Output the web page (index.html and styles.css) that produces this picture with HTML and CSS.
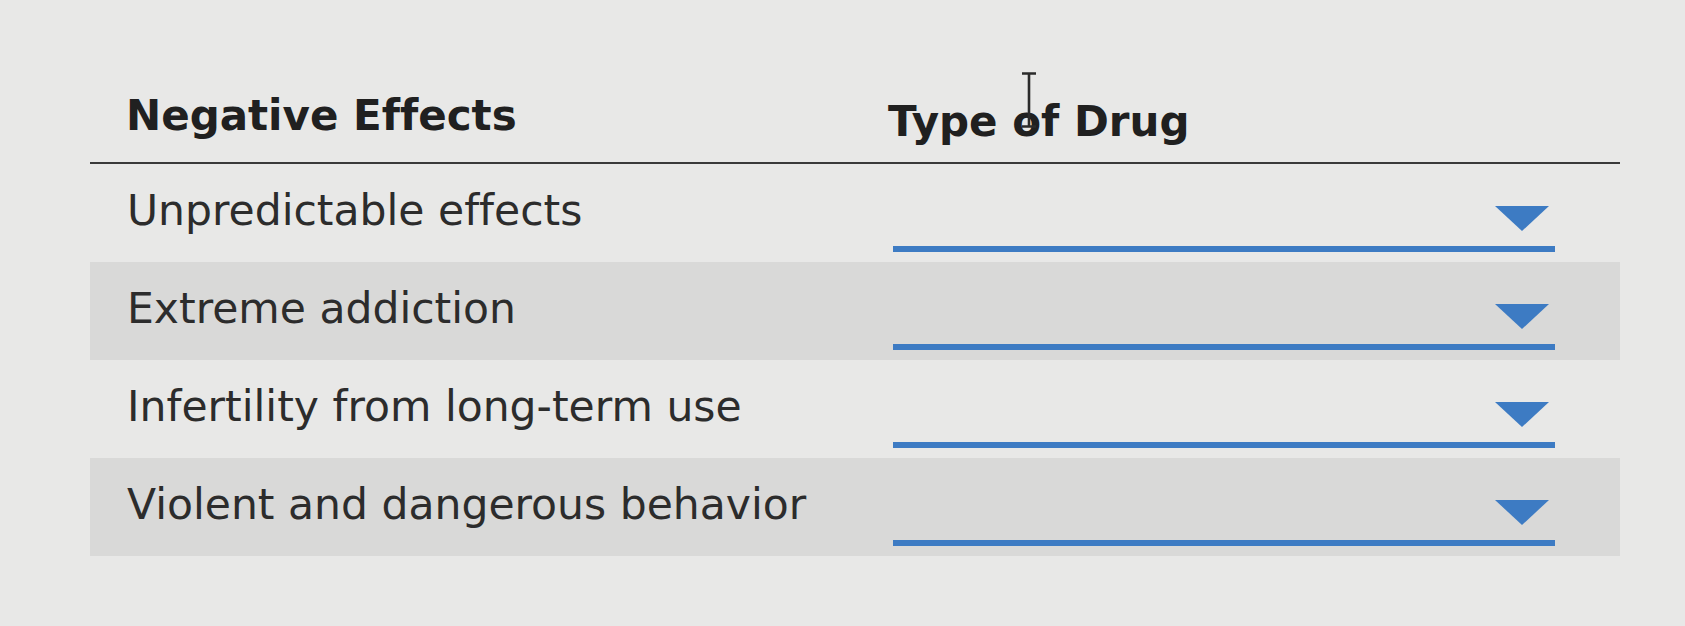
FILE: index.html
```html
<!DOCTYPE html>
<html lang="en">
<head>
<meta charset="utf-8">
<title>Negative Effects</title>
<link rel="stylesheet" href="styles.css">
</head>
<body>
<div class="page">
  <div class="table">
    <div class="head">
      <div class="hcell first">Negative Effects</div>
      <div class="hcell second">Type of Drug</div>
    </div>
    <div class="row">
      <div class="label">Unpredictable effects</div>
      <div class="select"><span class="arrow"></span><span class="line"></span></div>
    </div>
    <div class="row shaded">
      <div class="label">Extreme addiction</div>
      <div class="select"><span class="arrow"></span><span class="line"></span></div>
    </div>
    <div class="row">
      <div class="label">Infertility from long-term use</div>
      <div class="select"><span class="arrow"></span><span class="line"></span></div>
    </div>
    <div class="row shaded">
      <div class="label">Violent and dangerous behavior</div>
      <div class="select"><span class="arrow"></span><span class="line"></span></div>
    </div>
  </div>
  <svg class="cursor" width="20" height="56" viewBox="0 0 20 56" aria-hidden="true">
    <path d="M3 1.5h14M10 1.5v53M3 54.5h14" stroke="#2b2b2b" stroke-width="2.6" fill="none"/>
  </svg>
</div>
</body>
</html>
```
FILE: styles.css
```css
html, body {
  margin: 0;
  padding: 0;
  background: #e8e8e7;
}
body {
  font-family: "DejaVu Sans", Verdana, sans-serif;
  font-variant-ligatures: none;
  color: #2a2a2a;
  width: 1685px;
  height: 626px;
  overflow: hidden;
}
.page {
  position: relative;
  padding: 90px 0 0 90px;
}
.table {
  width: 1530px;
}
.head {
  display: grid;
  grid-template-columns: 798px 1fr;
  height: 52px;
  padding-bottom: 20px;
  border-bottom: 2px solid #3a3a3a;
}
.hcell {
  font-size: 42px;
  font-weight: bold;
  line-height: 52px;
  color: #202020;
}
.hcell.first {
  padding-left: 36px;
}
.hcell.second {
  padding-top: 6px;
}
.row {
  display: grid;
  grid-template-columns: 803px 662px;
  height: 98px;
}
.row.shaded {
  background: #d9d9d8;
}
.label {
  font-size: 42.5px;
  line-height: 52px;
  padding: 21px 0 0 37px;
  color: #2c2c2c;
}
.select {
  display: flex;
  flex-direction: column;
  justify-content: flex-end;
  padding-bottom: 10px;
}
.arrow {
  align-self: flex-end;
  margin: 0 6px 15px 0;
  width: 0;
  height: 0;
  border-left: 27px solid transparent;
  border-right: 27px solid transparent;
  border-top: 25px solid #3d7bc3;
}
.line {
  display: block;
  height: 6px;
  background: #3d7bc3;
}
.cursor {
  position: absolute;
  left: 1019px;
  top: 72px;
}
```
